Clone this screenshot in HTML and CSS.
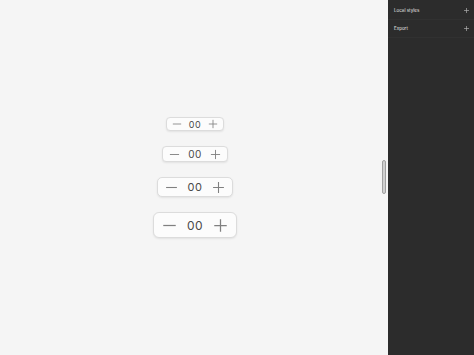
FILE: index.html
```html
<!DOCTYPE html>
<html lang="en">
<head>
	<meta charset="UTF-8">
	<title>Stepper sizes</title>
	<link rel="stylesheet" href="styles.css">
</head>
<body>
	<div class="app">
		<div class="canvas">
			<div class="stepper s1">
				<svg class="ico" viewBox="0 0 12 12"><path d="M1 6h10"/></svg>
				<span class="num">00</span>
				<svg class="ico" viewBox="0 0 12 12"><path d="M1 6h10M6 1v10"/></svg>
			</div>
			<div class="stepper s2">
				<svg class="ico" viewBox="0 0 12 12"><path d="M1 6h10"/></svg>
				<span class="num">00</span>
				<svg class="ico" viewBox="0 0 12 12"><path d="M1 6h10M6 1v10"/></svg>
			</div>
			<div class="stepper s3">
				<svg class="ico" viewBox="0 0 12 12"><path d="M1 6h10"/></svg>
				<span class="num">00</span>
				<svg class="ico" viewBox="0 0 12 12"><path d="M1 6h10M6 1v10"/></svg>
			</div>
			<div class="stepper s4">
				<svg class="ico" viewBox="0 0 12 12"><path d="M1 6h10"/></svg>
				<span class="num">00</span>
				<svg class="ico" viewBox="0 0 12 12"><path d="M1 6h10M6 1v10"/></svg>
			</div>
			<div class="scrollbar"></div>
		</div>
		<div class="sidebar">
			<div class="row">
				<span>Local styles</span>
				<svg class="plus" viewBox="0 0 6 6"><path d="M0 3h6M3 0v6"/></svg>
			</div>
			<div class="row">
				<span>Export</span>
				<svg class="plus" viewBox="0 0 6 6"><path d="M0 3h6M3 0v6"/></svg>
			</div>
		</div>
	</div>
</body>
</html>
```

FILE: styles.css
```css
html, body{
	margin: 0;
	height: 100%;
}
body{
	font-family: Inter, "Noto Sans", sans-serif;
}
.app{
	display: flex;
	height: 100%;
}
.canvas{
	position: relative;
	flex: 1;
	background: #f5f5f5;
	display: flex;
	flex-direction: column;
	align-items: center;
	justify-content: center;
	gap: 15px;
	padding-left: 2px;
}
.stepper{
	display: flex;
	align-items: center;
	justify-content: space-between;
	box-sizing: border-box;
	background: #fcfcfc;
	border: 1px solid #dcdcdc;
	box-shadow: 0 1px 2px rgba(0,0,0,0.08);
	color: #4a4a4a;
	letter-spacing: 0.5px;
}
.ico{
	fill: none;
	stroke: #808080;
	stroke-width: 1;
}
.s1{ width: 58px; height: 14px; padding: 0 5px; border-radius: 4px; font-size: 9px; }
.s1 .ico{ width: 10px; height: 10px; }
.s2{ width: 66px; height: 16px; padding: 0 6px; border-radius: 4px; font-size: 10px; }
.s2 .ico{ width: 11px; height: 11px; }
.s3{ width: 76px; height: 20px; padding: 0 7px; border-radius: 5px; font-size: 11px; }
.s3 .ico{ width: 13px; height: 13px; }
.s4{ width: 84px; height: 26px; padding: 0 8px; border-radius: 6px; font-size: 12px; }
.s4 .ico{ width: 15px; height: 15px; }
.scrollbar{
	position: absolute;
	right: 2px;
	top: 160px;
	width: 2px;
	height: 32px;
	background: #d0d0d0;
	border: 1px solid #a0a0a0;
	border-radius: 2px;
}
.sidebar{
	width: 86px;
	padding-top: 2px;
	background: #2c2c2c;
	color: #e6e6e6;
	font-size: 4.5px;
}
.row{
	display: flex;
	align-items: center;
	justify-content: space-between;
	height: 17px;
	padding: 0 5px 0 6px;
	border-bottom: 1px solid #313131;
}
.plus{
	width: 5px;
	height: 5px;
	fill: none;
	stroke: #b4b4b4;
	stroke-width: 0.8;
}
```
